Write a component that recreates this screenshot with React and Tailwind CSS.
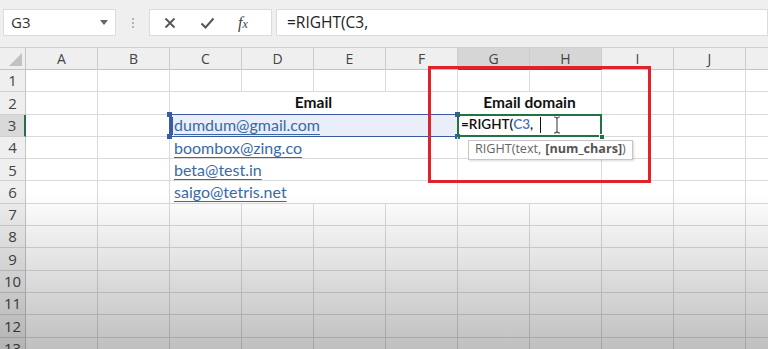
import React from "react";

const ui = { fontFamily: '"Open Sans", "Noto Sans", sans-serif' };
const cellFont = { fontFamily: 'Lato, "Open Sans", sans-serif' };

const COLS = ["A", "B", "C", "D", "E", "F", "G", "H", "I", "J", ""];
const EMAILS = {
  3: "dumdum@gmail.com",
  4: "boombox@zing.co",
  5: "beta@test.in",
  6: "saigo@tetris.net",
};

function Cell({ w = "w-[72px]", children, className = "" }) {
  return (
    <div className={`${w} shrink-0 h-full border-r border-b border-[#dadada] ${className}`}>
      {children}
    </div>
  );
}

function RowHeader({ n }) {
  const active = n === 3;
  return (
    <div
      className={`w-[26px] shrink-0 h-full flex items-center justify-center text-[15px] text-[#444] border-b border-[#cfcfcf] ${
        active ? "bg-[#d9d9d9] border-r-2 border-r-[#217346]" : "bg-[#efefef] border-r border-r-[#c4c4c4]"
      }`}
      style={ui}
    >
      {n}
    </div>
  );
}

function EmailCell({ r }) {
  const email = EMAILS[r];
  const selected = r === 3;
  return (
    <div
      className={`w-[288px] shrink-0 h-full border-r border-b border-[#dadada] relative flex items-center pl-[4px] ${
        selected ? "bg-[#e9eef8]" : ""
      }`}
      style={cellFont}
    >
      {r === 2 && (
        <div className="w-full text-center font-bold text-[15.5px] text-[#111] pr-[4px]">Email</div>
      )}
      {email && (
        <span className="text-[16px] text-[#3a6aa6] underline decoration-[1px] underline-offset-[3px] leading-none">
          {email}
        </span>
      )}
      {selected && (
        <>
          <div className="absolute left-[-1px] top-[-1px] right-[-1px] bottom-[-1px] border-[1.5px] border-[#3b5aa3] pointer-events-none" />
          <div className="absolute left-0 top-[2px] w-[2.5px] h-[18px] bg-[#3b5aa3]" />
          <div className="absolute left-[-3px] top-[-3px] w-[5px] h-[5px] bg-[#3b5aa3]" />
          <div className="absolute right-[-3px] top-[-3px] w-[5px] h-[5px] bg-[#3b5aa3]" />
          <div className="absolute left-[-3px] bottom-[-3px] w-[5px] h-[5px] bg-[#3b5aa3]" />
          <div className="absolute right-[-3px] bottom-[-3px] w-[5px] h-[5px] bg-[#3b5aa3]" />
        </>
      )}
    </div>
  );
}

function DomainCell({ r }) {
  const active = r === 3;
  return (
    <div
      className={`w-[144px] shrink-0 h-full border-r border-b border-[#dadada] relative flex items-center ${
        active ? "z-10" : ""
      }`}
      style={cellFont}
    >
      {r === 2 && (
        <div className="w-full text-center font-bold text-[15.5px] text-[#111]">Email domain</div>
      )}
      {active && (
        <>
          <div className="absolute left-[-1px] top-[-1px] right-[-1px] bottom-[-1px] border-2 border-[#217346] pointer-events-none" />
          <div className="absolute right-[-4px] bottom-[-4px] w-[6px] h-[6px] bg-[#217346] border border-white" />
          <div className="pl-[3px] text-[13.5px] text-[#111] font-semibold flex items-center leading-none">
            <span>=RIGHT(</span>
            <span className="text-[#4472c4]">C3</span>
            <span>,</span>
            <span className="ml-[7px] w-px h-[16px] bg-[#111]" />
            <svg className="ml-[12px]" width="8" height="18" viewBox="0 0 8 18">
              <path d="M1 1 Q4 1 4 3 Q4 1 7 1 M4 3 V15 M1 17 Q4 17 4 15 Q4 17 7 17" stroke="#555" strokeWidth="1.2" fill="none" />
            </svg>
          </div>
          <div
            className="absolute left-[10px] top-[25px] h-[20px] px-[6px] flex items-center bg-white border border-[#c6c6c6] shadow-[1px_1px_2px_rgba(0,0,0,0.15)] whitespace-nowrap text-[12.6px] text-[#666] z-20"
            style={ui}
          >
            RIGHT(text, <b className="ml-[4px] font-bold text-[#555]">[num_chars]</b>)
          </div>
        </>
      )}
    </div>
  );
}

function DataRow({ r }) {
  const merged = r >= 2 && r <= 6;
  return (
    <div className="flex h-[22.3px] w-[800px]">
      <RowHeader n={r} />
      <Cell />
      <Cell />
      {merged ? (
        <EmailCell r={r} />
      ) : (
        <>
          <Cell />
          <Cell />
          <Cell />
          <Cell />
        </>
      )}
      {merged ? (
        <DomainCell r={r} />
      ) : (
        <>
          <Cell />
          <Cell />
        </>
      )}
      <Cell />
      <Cell />
      <Cell />
    </div>
  );
}

export default function App() {
  const rows = Array.from({ length: 13 }, (_, i) => i + 1);
  return (
    <div className="w-[768px] h-[349px] relative overflow-hidden bg-white" style={ui}>
      {/* Formula bar */}
      <div className="h-[48px] bg-[#efefef] border-b border-[#d0d0d0] flex items-start pt-[9px]">
        <div className="ml-[3px] w-[113px] h-[27px] bg-white border border-[#dcdcdc] flex items-center justify-between pl-[7px] pr-[7px]">
          <span className="text-[15px] text-[#333]">G3</span>
          <svg width="8" height="5" viewBox="0 0 8 5">
            <path d="M0 0 H8 L4 5 Z" fill="#666" />
          </svg>
        </div>
        <div className="ml-[15px] w-[4px] h-[27px] flex flex-col items-center justify-center gap-[2px]">
          <span className="w-[2px] h-[2px] bg-[#b5b5b5]" />
          <span className="w-[2px] h-[2px] bg-[#b5b5b5]" />
          <span className="w-[2px] h-[2px] bg-[#b5b5b5]" />
        </div>
        <div className="ml-[14px] w-[123px] h-[27px] bg-white border border-[#dcdcdc] flex items-center">
          <svg className="ml-[14px]" width="12" height="12" viewBox="0 0 12 12">
            <path d="M1.5 1.5 L10.5 10.5 M10.5 1.5 L1.5 10.5" stroke="#555" strokeWidth="1.8" />
          </svg>
          <svg className="ml-[24px]" width="15" height="12" viewBox="0 0 15 12">
            <path d="M1.5 6.5 L5.5 10.5 L13.5 1.5" stroke="#555" strokeWidth="2" fill="none" />
          </svg>
          <span
            className="ml-[23px] text-[16px] italic text-[#444] leading-none"
            style={{ fontFamily: '"Liberation Serif", serif' }}
          >
            f<span className="text-[12px]">x</span>
          </span>
        </div>
        <div className="ml-[4px] flex-1 h-[27px] bg-white border border-[#dcdcdc] flex items-center pl-[10px]">
          <span className="text-[15.5px] text-[#222]">=RIGHT(C3,</span>
        </div>
      </div>

      {/* Column headers */}
      <div className="flex h-[22px] w-[800px]">
        <div className="w-[26px] shrink-0 h-full bg-[#efefef] border-r border-b border-[#c4c4c4] flex items-end justify-end pb-[3px] pr-[3px]">
          <svg width="13" height="13" viewBox="0 0 13 13">
            <path d="M13 0 V13 H0 Z" fill="#c2c2c2" />
          </svg>
        </div>
        {COLS.map((c, i) => {
          const hi = c === "G" || c === "H";
          return (
            <div
              key={i}
              className={`w-[72px] shrink-0 h-full flex items-center justify-center text-[14px] text-[#444] border-r border-[#cdcdcd] ${
                hi ? "bg-[#d6d6d6] border-b-2 border-b-[#217346]" : "bg-[#efefef] border-b border-b-[#c4c4c4]"
              }`}
            >
              {c}
            </div>
          );
        })}
      </div>

      {/* Grid */}
      <div className="flex flex-col">
        {rows.map((r) => (
          <DataRow key={r} r={r} />
        ))}
      </div>

      {/* Red annotation box */}
      <div className="absolute left-[428px] top-[66px] w-[223px] h-[117px] border-[3.5px] border-[#e1222b] pointer-events-none z-30" />

      {/* Video vignette */}
      <div className="absolute inset-0 pointer-events-none bg-linear-to-b from-transparent from-55% to-black/25 z-40" />
    </div>
  );
}
